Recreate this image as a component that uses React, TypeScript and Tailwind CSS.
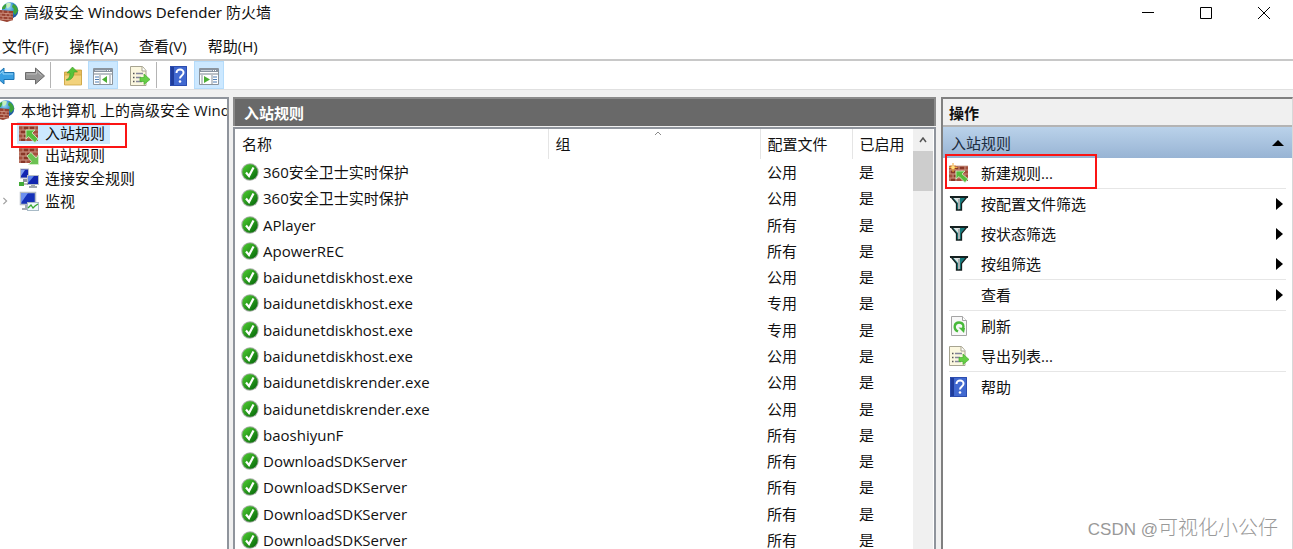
import type { ReactNode } from 'react';

const rules = [
  { name: '360安全卫士实时保护', profile: '公用' },
  { name: '360安全卫士实时保护', profile: '公用' },
  { name: 'APlayer', profile: '所有' },
  { name: 'ApowerREC', profile: '所有' },
  { name: 'baidunetdiskhost.exe', profile: '公用' },
  { name: 'baidunetdiskhost.exe', profile: '专用' },
  { name: 'baidunetdiskhost.exe', profile: '专用' },
  { name: 'baidunetdiskhost.exe', profile: '公用' },
  { name: 'baidunetdiskrender.exe', profile: '公用' },
  { name: 'baidunetdiskrender.exe', profile: '公用' },
  { name: 'baoshiyunF', profile: '所有' },
  { name: 'DownloadSDKServer', profile: '所有' },
  { name: 'DownloadSDKServer', profile: '所有' },
  { name: 'DownloadSDKServer', profile: '所有' },
  { name: 'DownloadSDKServer', profile: '所有' },
];

function Icon({ children }: { children: ReactNode }) {
  return (
    <svg viewBox="0 0 20 20" className="size-5 shrink-0" aria-hidden="true">
      {children}
    </svg>
  );
}

function Bricks() {
  return (
    <>
      <rect x="0" y="3" width="19" height="15" fill="#a44f3c" />
      <path d="M0 3h19M0 7h19M0 11h19M0 15h19M4 3v4M10 3v4M16 3v4M1 7v4M7 7v4M13 7v4M4 11v4M10 11v4M16 11v4M1 15v3M7 15v3M13 15v3" stroke="#c99a8a" strokeWidth="0.8" />
      <path d="M5 5h4M11 5h4M2 9h4M8 9h4M5 13h4M2 17h4" stroke="#7d3022" strokeWidth="1.3" />
    </>
  );
}

function FirewallIcon() {
  return (
    <Icon>
      <defs>
        <radialGradient id="globe" cx="0.4" cy="0.3" r="0.8">
          <stop offset="0" stopColor="#9adcf5" />
          <stop offset="0.5" stopColor="#2f86cc" />
          <stop offset="1" stopColor="#103f8c" />
        </radialGradient>
      </defs>
      <circle cx="11" cy="8.5" r="8.3" fill="url(#globe)" />
      <path d="M14 2c3 1 5 4 5 7l-3 4-2-3 1-3-2-2zM3 7c0-3 3-5 5-5l-2 5z" fill="#3fa43a" />
      <path d="M7 1.500c2-1 4-1 5 0l-1 3-3 2z" fill="#c4f0bd" />
      <path d="M0 8l14 1v9l-6 2-8-2z" fill="#98402f" />
      <path d="M0 11l14 1M0 14l14 1M0 17l14 1M4 8v3M9 9v3M2 11v3M7 11v3M11 12v3M4 14v4M9 15v3" stroke="#d49c8a" strokeWidth="0.8" />
    </Icon>
  );
}

function InboundIcon() {
  return (
    <Icon>
      <Bricks />
      <path d="M7 7h9l-3 3 6 6-3 3.500-6.500-6L7 16z" fill="#55bd3c" stroke="#d4f2ca" strokeWidth="0.8" />
    </Icon>
  );
}

function OutboundIcon() {
  return (
    <Icon>
      <Bricks />
      <path d="M19.500 19.500h-10l3-3L8 11l4-3.500 5 5.500 2.500-3z" fill="#6cc152" stroke="#d4f2ca" strokeWidth="0.8" />
    </Icon>
  );
}

function NewRuleIcon() {
  return (
    <Icon>
      <Bricks />
      <path d="M7 8h9l-3 3 6 5-3 3.500-6-6L7 16z" fill="#55bd3c" stroke="#d4f2ca" strokeWidth="0.8" />
      <path d="M4 0v9M0 4.500h8.500M1.500 2l5 5M6.500 2l-5 5" stroke="#f0a63a" strokeWidth="1" />
      <circle cx="4" cy="4.500" r="1.800" fill="#ffe07a" />
    </Icon>
  );
}

function ConnectionIcon() {
  return (
    <Icon>
      <rect x="1.500" y="1" width="8" height="9" fill="#1226b0" stroke="#b7bec6" />
      <path d="M2 2h4L2 8z" fill="#7c9cf0" />
      <path d="M4 11h4v3H4z" fill="#8d959d" />
      <rect x="8.500" y="7.500" width="11" height="9" fill="#1226b0" stroke="#b7bec6" />
      <path d="M9 8h6l-6 7z" fill="#5f84e8" />
      <path d="M12 17h4v1h2v2h-8v-2h2z" fill="#a0a7ae" />
      <path d="M0 14h5v4H0z" fill="#43ab38" />
      <path d="M5 16h4" stroke="#777" />
    </Icon>
  );
}

function MonitorIcon() {
  return (
    <Icon>
      <rect x="1.500" y="1.500" width="15" height="12" fill="#1531b8" stroke="#b4bcc6" strokeWidth="1.500" />
      <path d="M2 2h7L2 12z" fill="#6d90ef" />
      <path d="M6 14h4v3h1v2H3v-2h3z" fill="#a4abb3" />
      <rect x="8.500" y="11.500" width="11" height="8" fill="#eef8fb" stroke="#a8bac6" />
      <path d="M9 17l3-3 2 3 2-2 3-2" fill="none" stroke="#37a832" strokeWidth="1.300" />
    </Icon>
  );
}

function ExportIcon() {
  return (
    <Icon>
      <path d="M.5 .5h12l3.500 4v15H.5z" fill="#fbf7df" stroke="#a7a491" />
      <path d="M12 1v4h4" fill="#fff" stroke="#a7a491" />
      <path d="M3 7.500h1.500M3 11.500h1.500M3 15.500h1.500" stroke="#555" strokeWidth="1.500" />
      <path d="M6 7.500h7M6 11.500h5M6 15.500h6" stroke="#85859a" strokeWidth="1.300" />
      <path d="M10 11.500h4V8l6 5.500-6 5v-3h-4z" fill="#65cf45" stroke="#49ad31" strokeWidth="0.700" />
    </Icon>
  );
}

function HelpIcon() {
  return (
    <Icon>
      <path d="M1 0h17v20H1z" fill="#4169d0" />
      <path d="M1 0h4v20H1z" fill="#1f3d9c" />
      <path d="M1.500 0.500h16v19h-16z" fill="none" stroke="#2c4daf" />
      <path d="M7.500 7c0-5 7.500-4.500 7 0-.2 2.500-3.500 2.500-3.500 5.500" fill="none" stroke="#fff" strokeWidth="2" />
      <circle cx="11" cy="15.500" r="1.300" fill="#fff" />
    </Icon>
  );
}

function RefreshIcon() {
  return (
    <Icon>
      <path d="M2.500 .5h11l4 4v15h-15z" fill="#f8f8f8" stroke="#a4a4a4" />
      <path d="M13.500 .5v4h4" fill="#fff" stroke="#a4a4a4" />
      <path d="M9 15.500C4 13 5 6.500 10 6.500c4.500 0 5.500 4 3.500 7" fill="none" stroke="#48b93a" strokeWidth="2.400" />
      <path d="M9.500 11.500l6.500.500-1 5z" fill="#48b93a" />
    </Icon>
  );
}

function FilterIcon() {
  return (
    <Icon>
      <path d="M2 3h16l-5.500 6.500V16h-5V9.500z" fill="#dfe4e4" />
      <path d="M11 4h6l-5 5.500V16h-2V9z" fill="#157c7e" />
      <path d="M3.500 4l5 5.500V16" fill="none" stroke="#157c7e" strokeWidth="1.300" />
      <path d="M10 5v10" stroke="#a9b2b2" strokeWidth="2" />
      <path d="M2 3h16l-5.500 6.500V16h-5V9.500z" fill="none" stroke="#162020" strokeWidth="1.300" />
      <path d="M1 3h18" stroke="#162020" strokeWidth="2" />
    </Icon>
  );
}

function FolderUpIcon() {
  return (
    <Icon>
      <path d="M1.500 6h7l2-2h8v14h-17z" fill="#e8be58" stroke="#c49a3a" strokeWidth="0.800" />
      <path d="M1.500 9h17v10h-17z" fill="#f2d27c" stroke="#cda443" strokeWidth="0.800" />
      <path d="M3 14c3-1 4-4 4-7H4l5.500-6 5 5H11c0 5-3 9-8 8z" fill="#56c23a" stroke="#3a9a27" strokeWidth="0.600" />
    </Icon>
  );
}

function PaneIcon({ side }: { side: 'left' | 'right' }) {
  return (
    <Icon>
      <path d="M0.500 2.500h19v16H.5z" fill="#fff" stroke="#8b939b" />
      <path d="M1 3h18v3H1z" fill="#8893a0" />
      <path d="M2 4.500h11" stroke="#c5cdd5" />
      <path d="M14 4.500h1M16 4.500h1" stroke="#fff" />
      <path d="M1 8h18" stroke="#a4acb4" strokeWidth="1.500" />
      {side === 'left' ? (
        <>
          <path d="M7 9v9M17 9v9" stroke="#8b939b" />
          <path d="M2 11h4M2 13.500h4M2 16h4" stroke="#4c7cb4" />
          <path d="M14 10v7l-5-3.500z" fill="#4caf35" />
        </>
      ) : (
        <>
          <path d="M3 9v9M13 9v9" stroke="#8b939b" />
          <path d="M14 11h4M14 13.500h4M14 16h4" stroke="#4c7cb4" />
          <path d="M5 10v7l6-3.500z" fill="#4caf35" />
        </>
      )}
    </Icon>
  );
}

function CheckIcon() {
  return (
    <svg viewBox="0 0 18 18" className="size-[18px] shrink-0" aria-hidden="true">
      <defs>
        <linearGradient id="check" x1="0" y1="0" x2="1" y2="1">
          <stop offset="0.1" stopColor="#48c42e" />
          <stop offset="0.9" stopColor="#0a6e0c" />
        </linearGradient>
      </defs>
      <circle cx="9" cy="9" r="8.700" fill="#a3aba3" />
      <circle cx="9" cy="9" r="7.700" fill="url(#check)" />
      <path d="M5 9.500l3 3.500 4.500-8.500" fill="none" stroke="#fff" strokeWidth="2.200" />
    </svg>
  );
}

function ToolButton({ label, active, children }: { label: string; active?: boolean; children: ReactNode }) {
  return (
    <button
      type="button"
      aria-label={label}
      className={`flex h-7 w-[30px] items-center justify-center border pt-px ${active ? 'border-[#b5dcfb] bg-[#cce8ff]' : 'border-transparent'}`}
    >
      {children}
    </button>
  );
}

function TreeItem({ icon, label, selected, expandable }: { icon: ReactNode; label: string; selected?: boolean; expandable?: boolean }) {
  return (
    <li className="flex items-center">
      <span className="flex w-[17px] shrink-0 pl-[2px]">
        {expandable && (
          <svg viewBox="0 0 6 10" className="h-2 w-[6px]" fill="none" stroke="#a0a0a0" strokeWidth="1.500">
            <path d="M1 1l4 4-4 4" />
          </svg>
        )}
      </span>
      <button type="button" className={`flex h-full items-center gap-[6px] pr-[5px] pl-[2px] ${selected ? 'bg-[#cce8ff]' : ''}`}>
        {icon}
        {label}
      </button>
    </li>
  );
}

function Action({ icon, label, submenu }: { icon?: ReactNode; label: string; submenu?: boolean }) {
  return (
    <button type="button" className="flex h-[30px] w-full items-center pr-[9px] pl-[6px] text-left">
      <span className="flex w-8 shrink-0">{icon}</span>
      <span className="flex-1">{label}</span>
      {submenu && (
        <svg viewBox="0 0 7 12" className="h-3 w-[7px]">
          <path d="M0 0l7 6-7 6z" />
        </svg>
      )}
    </button>
  );
}

function Divider() {
  return <hr className="mr-[6px] ml-[6px] border-[#e6e6e6]" />;
}

export default function App() {
  return (
    <div className="relative flex h-screen flex-col overflow-hidden bg-[#f0f0f0] font-['Open_Sans','Noto_Sans_CJK_SC',sans-serif] text-[15px] leading-5 text-[#111]">
      <header className="bg-white">
        <div className="flex h-[26px] items-center">
          <div className="-ml-px flex flex-1 items-center gap-[5px] pb-[2px]">
            <FirewallIcon />
            <h1 className="font-['Noto_Sans','Noto_Sans_CJK_SC',sans-serif]">高级安全 Windows Defender 防火墙</h1>
          </div>
          <div className="flex h-full">
            <button type="button" aria-label="最小化" className="flex w-[58px] items-center justify-center">
              <svg viewBox="0 0 12 12" className="size-3" stroke="#000"><path d="M0 5.500h12" /></svg>
            </button>
            <button type="button" aria-label="最大化" className="flex w-[58px] items-center justify-center">
              <svg viewBox="0 0 12 12" className="size-3" fill="none" stroke="#000"><path d="M.5.5h11v11H.5z" /></svg>
            </button>
            <button type="button" aria-label="关闭" className="flex w-[58px] items-center justify-center">
              <svg viewBox="0 0 12 12" className="size-3" stroke="#000"><path d="M0 0l12 12M12 0L0 12" /></svg>
            </button>
          </div>
        </div>
        <nav className="mt-[7px] flex h-[26px] items-center gap-[21px] pl-[2px]">
          <button type="button">文件(F)</button>
          <button type="button">操作(A)</button>
          <button type="button">查看(V)</button>
          <button type="button">帮助(H)</button>
        </nav>
        <div className="flex h-[31px] items-center border-t-2 border-b border-t-[#c8c8c8] border-b-[#e0e0e0]">
          <div className="-ml-[10px] flex">
            <ToolButton label="后退">
              <Icon>
                <path d="M0 10l9-8v4.500h10v7H9V18z" fill="#3ba0e2" stroke="#1c74b4" />
                <path d="M3 9.500L8 5v3h10" fill="none" stroke="#9ad6f7" />
              </Icon>
            </ToolButton>
            <ToolButton label="前进">
              <Icon>
                <path d="M19.500 10l-9-8v4.500H.5v7h10V18z" fill="#959595" stroke="#6b6b6b" />
                <path d="M1.500 8h10V5l5 4.500" fill="none" stroke="#bdbdbd" />
              </Icon>
            </ToolButton>
          </div>
          <span className="h-[26px] w-px bg-[#b4b4b4]" />
          <div className="ml-[7px] flex">
            <ToolButton label="向上"><FolderUpIcon /></ToolButton>
            <ToolButton label="显示控制台树" active><PaneIcon side="left" /></ToolButton>
          </div>
          <div className="mr-px ml-[7px] flex">
            <ToolButton label="导出列表"><ExportIcon /></ToolButton>
          </div>
          <span className="mr-[7px] h-[26px] w-px bg-[#b4b4b4]" />
          <ToolButton label="帮助"><HelpIcon /></ToolButton>
          <ToolButton label="显示操作窗格" active><PaneIcon side="right" /></ToolButton>
        </div>
      </header>

      <main className="mt-[7px] flex min-h-0 flex-1">
        <aside className="relative mr-1 w-[229px] shrink-0 overflow-hidden border-t-2 border-r-2 border-[#8f949c] bg-white">
          <ul className="grid h-[113px] grid-rows-5 whitespace-nowrap">
            <li className="-ml-[5px] flex items-center gap-[6px]">
              <FirewallIcon />
              <span className="min-w-0 flex-1 overflow-hidden">本地计算机 上的高级安全 Wind</span>
            </li>
            <TreeItem icon={<InboundIcon />} label="入站规则" selected />
            <TreeItem icon={<OutboundIcon />} label="出站规则" />
            <TreeItem icon={<ConnectionIcon />} label="连接安全规则" />
            <TreeItem icon={<MonitorIcon />} label="监视" expandable />
          </ul>
          <div className="pointer-events-none absolute top-6 left-[11px] h-[25px] w-[116px] border-2 border-[#fb1414]" />
        </aside>

        <section className="mr-[5px] flex min-w-0 flex-1 flex-col">
          <h2 className="h-[29px] shrink-0 border-2 border-b-0 border-[#8a8a8a] bg-[#696969] pl-[9px] leading-7 font-bold text-white">入站规则</h2>
          <div className="mt-px flex min-h-0 flex-1 border-x-2 border-t-2 border-[#8f949c] bg-white">
            <div className="min-w-0 flex-1 overflow-hidden">
              <table className="h-[424px] w-full table-fixed text-left">
                <thead>
                  <tr className="h-[30px]">
                    <th className="w-[313px] border-r border-[#e5e5e5] pl-[7px] font-normal">名称</th>
                    <th className="relative border-r border-[#e5e5e5] pl-[7px] font-normal">
                      组
                      <svg viewBox="0 0 8 5" className="absolute top-[2px] left-1/2 h-[5px] w-2" fill="none" stroke="#8a8a8a">
                        <path d="M1 4l3-3 3 3" />
                      </svg>
                    </th>
                    <th className="w-[92px] border-r border-[#e5e5e5] pl-[7px] font-normal">配置文件</th>
                    <th className="w-[61px] pl-[7px] font-normal">已启用</th>
                  </tr>
                </thead>
                <tbody>
                  {rules.map((rule, i) => (
                    <tr key={i}>
                      <td className="pl-[6px]">
                        <div className="flex items-center gap-1">
                          <CheckIcon />
                          {rule.name}
                        </div>
                      </td>
                      <td />
                      <td className="pl-[7px]">{rule.profile}</td>
                      <td className="pl-[7px]">是</td>
                    </tr>
                  ))}
                </tbody>
              </table>
            </div>
            <div className="mr-px w-5 shrink-0 bg-[#f0f0f0]">
              <button type="button" aria-label="向上滚动" className="flex h-[22px] w-full items-center justify-center">
                <svg viewBox="0 0 8 6" className="h-[6px] w-2" fill="none" stroke="#555" strokeWidth="1.500">
                  <path d="M1 5l3-4 3 4" />
                </svg>
              </button>
              <div className="h-10 bg-[#cdcdcd]" />
            </div>
          </div>
        </section>

        <aside className="relative w-[352px] shrink-0 border-t-2 border-r border-l-2 border-t-[#808080] border-r-[#d8d8d8] border-l-[#808080] bg-white">
          <h2 className="h-7 border-b-2 border-[#b4b4b4] bg-[#f0f0f0] pl-[6px] leading-7 font-bold">操作</h2>
          <button type="button" className="flex h-[31px] w-full items-center justify-between bg-linear-to-b from-[#bad2ea] to-[#98b4d4] pr-2 pl-2 text-[#1c2c40]">
            入站规则
            <svg viewBox="0 0 12 6" className="h-[6px] w-3">
              <path d="M0 6l6-6 6 6z" fill="#000" />
            </svg>
          </button>
          <Action icon={<NewRuleIcon />} label="新建规则..." />
          <Divider />
          <Action icon={<FilterIcon />} label="按配置文件筛选" submenu />
          <Action icon={<FilterIcon />} label="按状态筛选" submenu />
          <Action icon={<FilterIcon />} label="按组筛选" submenu />
          <Divider />
          <Action label="查看" submenu />
          <Divider />
          <Action icon={<RefreshIcon />} label="刷新" />
          <Action icon={<ExportIcon />} label="导出列表..." />
          <Divider />
          <Action icon={<HelpIcon />} label="帮助" />
          <div className="pointer-events-none absolute top-[55px] left-[2px] h-[35px] w-[152px] border-2 border-[#fb1414]" />
        </aside>
      </main>

      <p className="absolute right-[15px] bottom-[5px] font-['Liberation_Sans','Noto_Sans_CJK_SC',sans-serif] text-xl leading-7 text-[#999]">
        <span className="text-[17px]">CSDN @</span>
        <span className="font-light">可视化小公仔</span>
      </p>
    </div>
  );
}
